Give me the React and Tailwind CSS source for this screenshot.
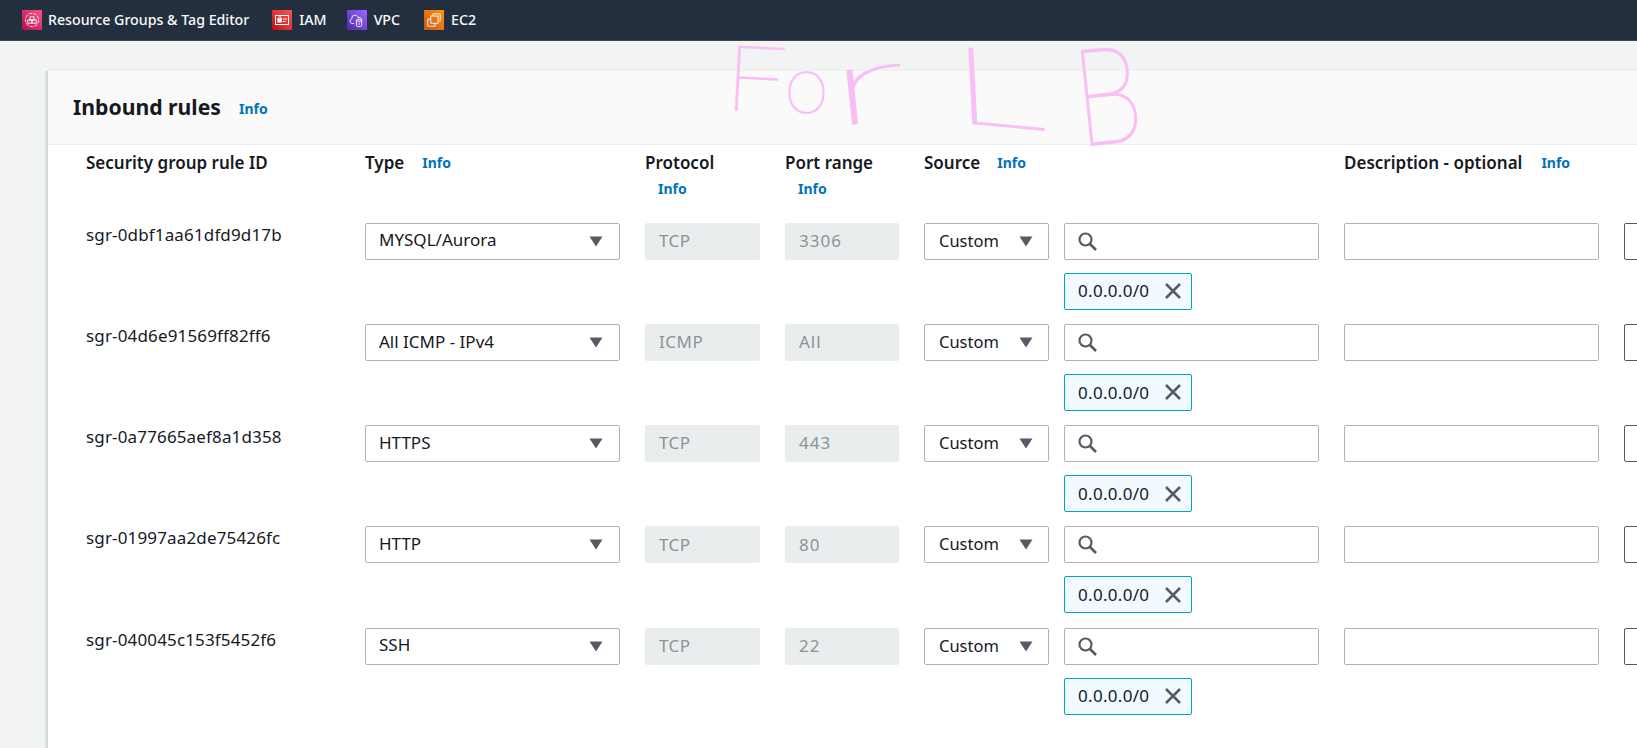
const rules = [
  { id: 'sgr-0dbf1aa61dfd9d17b', type: 'MYSQL/Aurora', protocol: 'TCP', port: '3306' },
  { id: 'sgr-04d6e91569ff82ff6', type: 'All ICMP - IPv4', protocol: 'ICMP', port: 'All' },
  { id: 'sgr-0a77665aef8a1d358', type: 'HTTPS', protocol: 'TCP', port: '443' },
  { id: 'sgr-01997aa2de75426fc', type: 'HTTP', protocol: 'TCP', port: '80' },
  { id: 'sgr-040045c153f5452f6', type: 'SSH', protocol: 'TCP', port: '22' },
]

function Info({ className = '' }) {
  return <a className={`text-[14px] font-bold leading-5 text-[#0073bb] ${className}`}>Info</a>
}

function Caret() {
  return (
    <svg width="14" height="11" viewBox="0 0 14 11" className="shrink-0">
      <path d="M0.5 0.5h13L7 10.5z" fill="#545b64" />
    </svg>
  )
}

function ResourceIcon() {
  return (
    <svg viewBox="0 0 20 20" className="w-5 h-5 bg-linear-to-tr from-[#b0084d] to-[#ff4f8b]">
      <g fill="none" stroke="#fff" strokeWidth="0.9">
        <circle cx="10" cy="10" r="6.6" strokeDasharray="3.4 1.2" />
        <rect x="8" y="6.8" width="4" height="3.2" />
        <rect x="5.8" y="10" width="4" height="3.2" />
        <rect x="10.2" y="10" width="4" height="3.2" />
      </g>
    </svg>
  )
}

function IamIcon() {
  return (
    <svg viewBox="0 0 20 20" className="w-5 h-5 bg-linear-to-tr from-[#bd0816] to-[#ff5252]">
      <g fill="none" stroke="#fff" strokeWidth="1">
        <rect x="3.5" y="5.5" width="13" height="9" />
        <rect x="5.8" y="9" width="3.6" height="3" fill="#fff" />
        <path d="M6.5 9V7.8a1.2 1.2 0 0 1 2.4 0V9M11 9h3.8M11 11.5h2.4" />
      </g>
    </svg>
  )
}

function VpcIcon() {
  return (
    <svg viewBox="0 0 20 20" className="w-5 h-5 bg-linear-to-tr from-[#4d27aa] to-[#a166ff]">
      <g fill="none" stroke="#fff" strokeWidth="0.9">
        <path d="M7 13.5H5.2a2.4 2.4 0 0 1-.4-4.7 3.2 3.2 0 0 1 3-3.6c1.6 0 2.8.9 3.3 2.3a2.6 2.6 0 0 1 3.5 2.2" />
        <ellipse cx="12" cy="10.2" rx="2.6" ry="1" />
        <path d="M9.4 10.2v5.4c0 .6 1.2 1 2.6 1s2.6-.4 2.6-1v-5.4" />
        <path d="M12 12.4v2.6" />
      </g>
    </svg>
  )
}

function Ec2Icon() {
  return (
    <svg viewBox="0 0 20 20" className="w-5 h-5 bg-linear-to-tr from-[#c8511b] to-[#ff9900]">
      <g fill="none" stroke="#fff" strokeWidth="0.9">
        <path d="M9 6V3.8h7.2V11H14" />
        <rect x="6.8" y="6" width="7.2" height="7.2" />
        <path d="M6.8 9H3.8v7.2H11v-3" />
      </g>
    </svg>
  )
}

function Handwriting() {
  // pen annotation over the card, kept as real letters
  const ink = 'absolute font-["Roboto",sans-serif] font-thin leading-none text-[#fbbdf5] select-none'
  return (
    <div className="absolute inset-0 pointer-events-none">
      <span className={`${ink} left-[730px] top-[35px] text-[92px] scale-x-[1.15] rotate-3`}>F</span>
      <span className={`${ink} left-[785px] top-[48px] text-[78px]`}>o</span>
      <span className={`${ink} left-[850px] top-[36px] text-[104px] scale-x-[2.2] -rotate-6`}>r</span>
      <span className={`${ink} left-[972px] top-[36px] text-[108px] scale-x-[1.7] skew-y-[14deg] -rotate-3`}>L</span>
      <span className={`${ink} left-[1067px] top-[30px] text-[136px] scale-x-[0.8] -rotate-6`}>B</span>
    </div>
  )
}

function Row({ rule }) {
  return (
    <div className="flex h-[101.25px] items-start">
      <div className="w-[279px] shrink-0 pt-[2px] text-[17px] leading-5 tracking-[0.15px] text-[#16191f]">{rule.id}</div>
      <div className="flex h-[37px] w-[255px] shrink-0 items-center justify-between rounded-[2px] border border-[#aab7b8] pl-[13px] pr-[16px] text-[#16191f]">
        <span className="pb-[2px] text-[17px]">{rule.type}</span>
        <Caret />
      </div>
      <div className="ml-[25px] flex h-[37px] w-[115px] shrink-0 items-center rounded-[2px] bg-[#eaeded] pb-[1px] pl-[14px] text-[17px] tracking-[0.5px] text-[#879596]">{rule.protocol}</div>
      <div className="ml-[25px] flex h-[37px] w-[114px] shrink-0 items-center rounded-[2px] bg-[#eaeded] pb-[1px] pl-[14px] text-[17px] tracking-[1px] text-[#879596]">{rule.port}</div>
      <div className="ml-[25px] flex h-[37px] w-[125px] shrink-0 items-center justify-between rounded-[2px] border border-[#aab7b8] pl-[14px] pr-[15px] text-[16.5px] text-[#16191f]">
        <span>Custom</span>
        <Caret />
      </div>
      <div className="ml-[15px] w-[255px] shrink-0">
        <div className="flex h-[37px] items-center rounded-[2px] border border-[#aab7b8] pl-[13px]">
          <svg width="19" height="19" viewBox="0 0 19 19" fill="none" stroke="#545b64" strokeWidth="2.2">
            <circle cx="7.5" cy="7.5" r="6" />
            <path d="M12 12l6 6" strokeWidth="2.6" />
          </svg>
        </div>
        <div className="mt-[13px] flex h-[37px] w-[128px] items-center rounded-[2px] border border-[#00a1c9] bg-[#f1faff] pl-[13px] text-[17px] tracking-[0.3px] text-[#16191f]">
          <span className="w-[87px]">0.0.0.0/0</span>
          <svg width="16" height="16" viewBox="0 0 16 16" stroke="#545b64" strokeWidth="2.5" fill="none">
            <path d="M1 1l14 14M15 1L1 15" />
          </svg>
        </div>
      </div>
      <div className="ml-[25px] h-[37px] w-[255px] shrink-0 rounded-[2px] border border-[#aab7b8]" />
      <div className="ml-[25px] h-[37px] w-[100px] shrink-0 rounded-[2px] border border-[#545b64]" />
    </div>
  )
}

export default function App() {
  return (
    <div className='relative h-[748px] overflow-hidden bg-[#f2f3f3] font-["Noto_Sans",sans-serif]'>
      <nav className="flex h-[41px] items-center border-b border-[#414750] bg-[#232f3e] pl-[22px] text-[14.2px] font-medium text-[#fafafa]">
        <div className="flex items-center gap-[6px]"><ResourceIcon /><span>Resource Groups &amp; Tag Editor</span></div>
        <div className="ml-[23px] flex items-center gap-[7px]"><IamIcon /><span>IAM</span></div>
        <div className="ml-[20px] flex items-center gap-[7px]"><VpcIcon /><span>VPC</span></div>
        <div className="ml-[24px] flex items-center gap-[7px]"><Ec2Icon /><span>EC2</span></div>
      </nav>

      <section className="ml-[46px] mt-[30px] h-[700px] border-l-2 border-[#d5dbdb] bg-white shadow-sm">
        <header className="flex h-[74px] items-center gap-[18px] border-b border-[#eaeded] bg-[#fafafa] pl-[25px]">
          <h2 className="mb-[1px] text-[21.2px] font-bold leading-6 text-[#16191f]">Inbound rules</h2>
          <Info className="mt-[3px]" />
        </header>

        <div className="pl-[38px]">
          <div className="flex h-[77.6px] pt-[8px] text-[17px] font-semibold leading-5 text-[#16191f]">
            <div className="w-[279px] shrink-0">Security group rule ID</div>
            <div className="flex w-[280px] shrink-0 gap-[18px]"><span>Type</span><Info /></div>
            <div className="w-[140px] shrink-0"><div>Protocol</div><Info className="mt-[6px] ml-[13px] block" /></div>
            <div className="w-[139px] shrink-0"><div>Port range</div><Info className="mt-[6px] ml-[13px] block" /></div>
            <div className="flex w-[420px] shrink-0 gap-[17px]"><span>Source</span><Info /></div>
            <div className="flex shrink-0 gap-[19px]"><span>Description - optional</span><Info /></div>
          </div>
          {rules.map((rule) => <Row key={rule.id} rule={rule} />)}
        </div>
      </section>

      <Handwriting />
    </div>
  )
}
